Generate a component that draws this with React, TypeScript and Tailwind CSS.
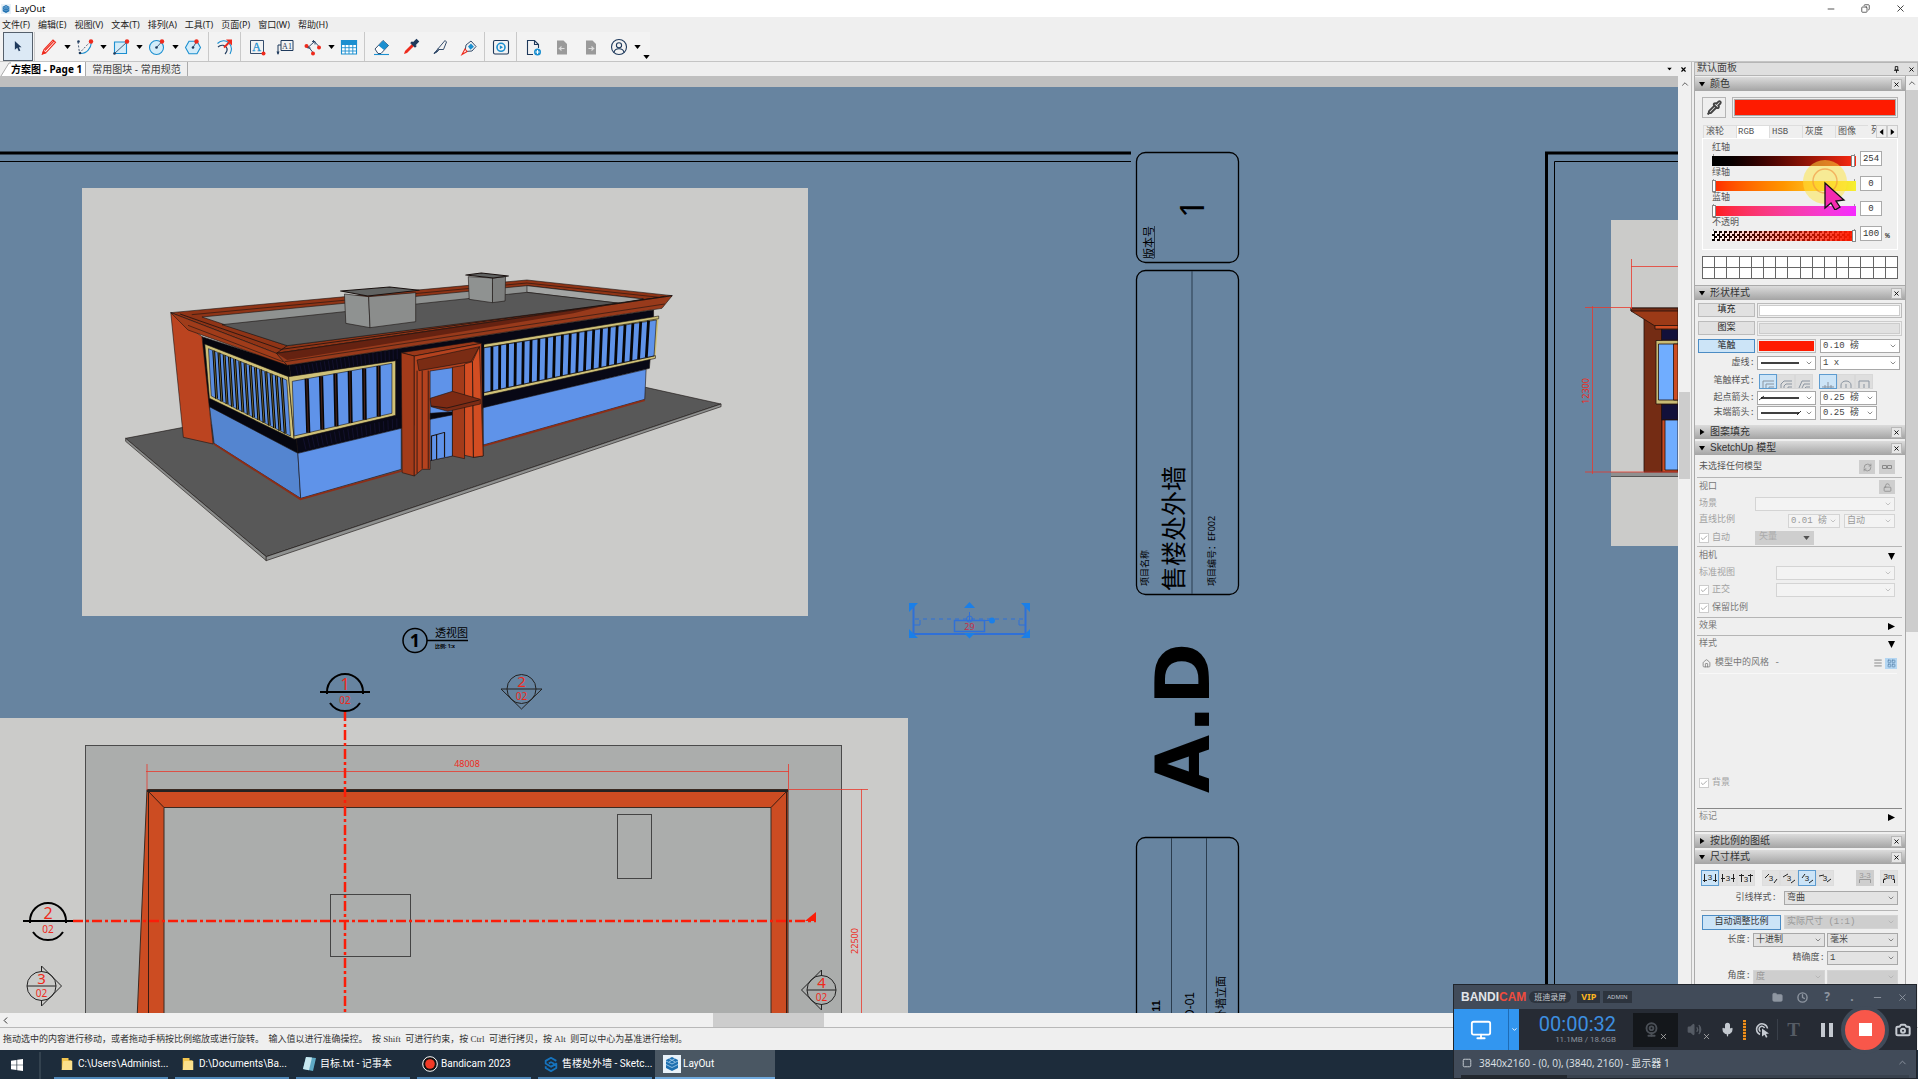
import type { ReactNode } from "react";
import {
  Camera,
  Check,
  ChevronDown,
  ChevronLeft,
  ChevronUp,
  Clock,
  Copy,
  Folder,
  Home,
  LayoutGrid,
  Menu,
  Mic,
  Minus,
  Monitor,
  Pipette,
  RefreshCw,
  Square,
  Unlock,
  Volume2,
  Webcam,
  X,
} from "lucide-react";
import clsx from "clsx";

const NAVY = "#1f3a5c";
const BLUE = "#1b8fd0";
const RED = "#ee2a1c";

/* ---------- small shared controls ---------- */

function Caret({ className }: { className?: string }) {
  return (
    <svg viewBox="0 0 8 5" className={clsx("h-[4px] w-[7px]", className)}>
      <path d="M0 0h8L4 5z" fill="#000" />
    </svg>
  );
}

function Select({
  label,
  value,
  className,
  disabled,
  flat,
  children,
}: {
  label: string;
  value?: string;
  className?: string;
  disabled?: boolean;
  flat?: boolean;
  children?: ReactNode;
}) {
  return (
    <span className={clsx("relative flex h-[14px] items-center", className)}>
      <select
        aria-label={label}
        disabled={disabled}
        className={clsx(
          "h-full w-full appearance-none border pl-[2px] text-[9px] leading-[12px] outline-none",
          disabled ? "border-[#d4d4d4] text-[#999]" : "border-[#a8a8a8] text-[#444]",
          flat ? (disabled ? "bg-[#cecece]" : "bg-[#e3e3e3]") : disabled ? "bg-[#f3f3f3]" : "bg-white"
        )}
      >
        <option>{value ?? ""}</option>
      </select>
      {children}
      <ChevronDown
        size={8}
        strokeWidth={2}
        className={clsx("pointer-events-none absolute right-[3px]", disabled ? "text-[#aaa]" : "text-[#555]")}
      />
    </span>
  );
}

function Tick({ label, dark }: { label: string; dark?: boolean }) {
  return (
    <label className={clsx("flex items-center gap-[3px] leading-[12px]", dark ? "text-[#777]" : "text-[#a2a2a2]")}>
      <span className="relative flex size-[10px]">
        <input type="checkbox" defaultChecked disabled className="size-[10px] appearance-none border border-[#ccc] bg-white" />
        <Check size={8} strokeWidth={3} className="pointer-events-none absolute top-px left-px text-[#aaa]" />
      </span>
      {label}
    </label>
  );
}

function SectionHead({ title, open }: { title: string; open?: boolean }) {
  return (
    <div className="flex h-[14px] items-center bg-linear-to-b from-[#dcdcdc] to-[#a4a4a4] pr-[3px] pl-[4px] font-['Liberation_Sans','Noto_Sans_CJK_SC',sans-serif]">
      <svg viewBox="0 0 6 6" className="size-[6px]">
        <path d={open ? "M0 1h6L3 5.5z" : "M1 0v6l4.500-3z"} fill="#000" />
      </svg>
      <h2 className="ml-[5px] flex-1 text-[10px] leading-none text-[#333]">{title}</h2>
      <button aria-label={`关闭${title}`} className="flex size-[11px] items-center justify-center border border-[#b8b8b8] bg-[#e6e6e6]">
        <X size={7} strokeWidth={3} className="text-black" />
      </button>
    </div>
  );
}

function Mark({ open }: { open?: boolean }) {
  return (
    <svg viewBox="0 0 6 6" className="size-[7px]">
      <path d={open ? "M0 0h6L3 6z" : "M0 0v6l6-3z"} fill="#000" />
    </svg>
  );
}

/* ---------- toolbar ---------- */

function Tool({ label, wide, children }: { label: string; wide?: boolean; children: ReactNode }) {
  return (
    <button aria-label={label} className={clsx("flex h-full items-center justify-center", wide ? "w-[29px]" : "w-7")}>
      <svg viewBox="0 0 18 18" className="size-[18px]" fill="none" stroke={BLUE} strokeWidth="1.100">
        {children}
      </svg>
    </button>
  );
}

function Drop() {
  return (
    <button aria-label="更多" className="flex h-full w-2 items-center justify-center">
      <Caret />
    </button>
  );
}

function Sep() {
  return <span className="mx-[2px] -ml-px h-full w-[3px] border-r border-[#c9c9c9]" />;
}

function Toolbar() {
  return (
    <div role="toolbar" className="flex h-[29px] items-center bg-[#efefef]">
      <div className="flex h-full items-center bg-[#f3f3f3] pl-[3px]">
        <button aria-label="选择" className="flex h-full w-[30px] items-center justify-center border border-[#55606c] bg-[#dce9f5]">
          <svg viewBox="0 0 10 14" className="h-[11px] w-[8px]">
            <path d="M1 0v11l3-2.500 2 4.500 2-1-2-4h3.500z" fill={NAVY} />
          </svg>
        </button>
        <span className="h-full w-[2px] border-r border-[#c9c9c9]" />
        <Tool label="铅笔">
          <path d="M2.500 16l1.500-4.500L13 2l2.500 2.200L6.500 14z" stroke={RED} fill="#fff" />
          <path d="M5 12.500L14 3.200M2.500 16l1-3L5.500 15z" stroke={RED} fill={RED} />
        </Tool>
        <Drop />
        <Tool label="圆弧">
          <path d="M2 4l1.500 11L14 4" stroke={NAVY} strokeWidth=".8" strokeDasharray="2 1.500" />
          <path d="M4 15.500C11 16 15 10 15.500 4" />
          <circle cx="15" cy="3.500" r="2.200" fill={RED} stroke="none" />
          <circle cx="2.500" cy="3.500" r="1.300" fill={NAVY} stroke="none" />
          <circle cx="4" cy="15" r="1.300" fill={NAVY} stroke="none" />
        </Tool>
        <Drop />
        <Tool label="矩形">
          <path d="M2.500 4h12v11.500h-12z" fill="#d3ecf9" />
          <path d="M2.500 15.500L15 4" stroke={NAVY} strokeWidth=".8" />
          <circle cx="15" cy="3.500" r="2.200" fill={RED} stroke="none" />
          <circle cx="2.500" cy="15.500" r="1.300" fill={NAVY} stroke="none" />
        </Tool>
        <Drop />
        <Tool label="圆">
          <circle cx="8.500" cy="9.500" r="7" fill="#d3ecf9" />
          <path d="M8.500 9.500L13.500 4" stroke={NAVY} strokeWidth=".8" />
          <circle cx="14" cy="3.500" r="2.200" fill={RED} stroke="none" />
          <circle cx="8.500" cy="9.500" r="1.300" fill={NAVY} stroke="none" />
        </Tool>
        <Drop />
        <Tool label="多边形">
          <path d="M1.500 9.500L5 3.200h8l3.500 6.300-3.500 6.300H5z" fill="#d3ecf9" />
          <path d="M9 9.500L12 4.500" stroke={NAVY} strokeWidth=".8" />
          <circle cx="12.500" cy="3.500" r="2.200" fill={RED} stroke="none" />
          <circle cx="9" cy="9.500" r="1.300" fill={NAVY} stroke="none" />
        </Tool>
        <Sep />
        <Tool label="偏移">
          <path d="M1.500 5.500C5 2 10 2 13 5c3 3 3 7 1 11" />
          <path d="M2 9c3-3 8-2 9 1.500.5 2-.5 4-2 5.500" stroke={NAVY} />
          <path d="M8 9.500l5-5" stroke={RED} strokeWidth="2" />
          <path d="M10 1.500h6V7.500z" fill={RED} stroke="none" />
        </Tool>
        <Sep />
        <Tool label="文本">
          <path d="M2.500 2.500h13v13h-13z" stroke={NAVY} strokeWidth=".9" />
          <text x="8.500" y="13" textAnchor="middle" fontSize="12" fill={BLUE} stroke={BLUE} strokeWidth=".3" fontFamily="Liberation Serif, serif">
            A
          </text>
          <circle cx="15.500" cy="15.500" r="2" fill={RED} stroke="none" />
        </Tool>
        <Tool label="标签">
          <path d="M5 2.500h12v10H5zM5 7H2v9" stroke={NAVY} strokeWidth="1" />
          <path d="M.5 13.500h3L2 17z" fill={NAVY} stroke="none" />
          <text x="11" y="10.500" textAnchor="middle" fontSize="8" fill={NAVY} stroke="none" fontFamily="Liberation Serif, serif">
            A1
          </text>
        </Tool>
        <Tool label="尺寸">
          <path d="M4 9.500L10.500 3.500M3 7l6 7.500M9 2l6 6.500" stroke={NAVY} strokeWidth=".9" />
          <path d="M3.500 7v3h3M8 3.500h3v3" stroke={NAVY} strokeWidth=".9" />
          <circle cx="2.500" cy="8" r="2" fill={RED} stroke="none" />
          <circle cx="9" cy="15.500" r="2" fill={RED} stroke="none" />
          <circle cx="15" cy="9.500" r="2" fill={RED} stroke="none" />
        </Tool>
        <Drop />
        <Tool label="表格">
          <path d="M1.500 2.500h15v13.500h-15z" fill="#fff" />
          <path d="M1.500 2.500h15v4h-15z" fill={BLUE} />
          <path d="M5.200 6v10M9 6v10M12.800 6v10M1.500 9.700h15M1.500 13h15" strokeWidth=".9" />
        </Tool>
        <Sep />
        <Tool label="橡皮擦" wide>
          <path d="M2 11l8-8.500 5.500 5L8 15.500H5z" fill="#fff" stroke={NAVY} strokeWidth=".9" />
          <path d="M5.500 7.500L10 2.500l5.500 5L11 12z" fill={BLUE} stroke="none" />
          <path d="M1 16.500h15" />
        </Tool>
        <Tool label="样式" wide>
          <path d="M2 16l1-3 7-7 2 2-7 7z" fill={RED} stroke="none" />
          <path d="M9 5l4 4 1-1-1-1 3.500-3.500-2-2L11 5l-1-1z" fill={NAVY} stroke={NAVY} />
        </Tool>
        <Tool label="分割" wide>
          <path d="M3 15.500L14 2.500l1.500 1.500-3 7.500H8zM3 15.500l3-1.500 2-2.500-1-1" stroke={NAVY} strokeWidth=".9" />
        </Tool>
        <Tool label="合并" wide>
          <path d="M5 13.500L6 7l5-4 5 5.500-4 4.500z" stroke={NAVY} strokeWidth=".9" />
          <path d="M8 8.500L11 5.500l3 3.300-3.500 3z" fill={BLUE} stroke="none" />
          <path d="M2 16.500L5 11l2 2.500z" fill="#fff" stroke={RED} />
        </Tool>
        <Sep />
        <Tool label="演示">
          <rect x="1.500" y="2.500" width="15" height="13.500" rx="1.500" stroke={NAVY} />
          <circle cx="9" cy="9.300" r="4" strokeWidth="1.600" />
          <path d="M7.800 7.300v4l3.200-2z" fill={BLUE} stroke="none" />
        </Tool>
        <Sep />
        <Tool label="添加页面">
          <path d="M9 16.500H3.500v-14h7l4 4V10M10.500 2.500v4h4" stroke={NAVY} />
          <circle cx="13.500" cy="14" r="3.500" fill={BLUE} stroke="none" />
          <path d="M11.500 14h4M13.500 12v4" stroke="#fff" />
        </Tool>
        <Tool label="上一页" wide>
          <path d="M4 2.500h6.500L14 6v10.500H4z" fill="#9a9a9a" stroke="none" />
          <path d="M11.500 10.500H6.500l2-2m-2 2l2 2" stroke="#ddd" />
        </Tool>
        <Tool label="下一页" wide>
          <path d="M4 2.500h6.500L14 6v10.500H4z" fill="#9a9a9a" stroke="none" />
          <path d="M6.500 10.500h5l-2-2m2 2l-2 2" stroke="#ddd" />
        </Tool>
        <Tool label="账户">
          <circle cx="9" cy="9" r="7.500" stroke={NAVY} />
          <circle cx="9" cy="7.300" r="2.600" stroke={NAVY} />
          <path d="M4 14.500c1-5 9-5 10 0" stroke={NAVY} />
        </Tool>
        <Drop />
        <Caret className="mt-[20px] ml-[2px]" />
      </div>
    </div>
  );
}

/* ---------- perspective drawing ---------- */

type Pt = [number, number];

const lerp = (a: Pt, b: Pt, t: number) => `${a[0] + (b[0] - a[0]) * t} ${a[1] + (b[1] - a[1]) * t}`;

function mullions(tl: Pt, tr: Pt, bl: Pt, br: Pt, n: number) {
  return Array.from({ length: n }, (_, i) => {
    const t = (i + 1) / (n + 1);
    return `M${lerp(tl, tr, t)}L${lerp(bl, br, t)}`;
  }).join("");
}

function Building() {
  const left = mullions([276, 506], [444, 600], [282, 648], [452, 768], 14);
  const front = mullions([456, 604], [672, 550], [460, 768], [672, 700], 6);
  const right = mullions([868, 503], [1238, 418], [868, 638], [1233, 528], 21);
  return (
    <svg
      x="80"
      y="180"
      width="730"
      height="440"
      viewBox="0 0 1568 1320"
      preserveAspectRatio="none"
      stroke="#1a1210"
      strokeWidth="1.500"
      strokeLinejoin="round"
    >
      {/* ground slab */}
      <path d="M98 775L222 742 1215 622 1377 672 400 1130z" fill="#585858" />
      <path d="M98 775L400 1130v12L98 784z" fill="#8a8c8b" />
      <path d="M400 1130L1377 672v8L400 1142z" fill="#8f9190" />
      {/* dark wall bands */}
      <path d="M262 470L450 555 468 820 274 680z" fill="#06060e" />
      <path d="M450 555L1232 390v22L1223 565 468 820z" fill="#080815" />
      <path d={mullions([455, 560], [690, 505], [460, 588], [690, 535], 26)} stroke="#1a163c" />
      <path d={mullions([470, 778], [690, 712], [476, 812], [690, 740], 22)} stroke="#1a163c" />
      {/* glazing below */}
      <path d="M278 680L468 820 474 955 288 790z" fill="#5485d0" />
      <path d="M468 820L690 745V868L474 955z" fill="#5f93e9" />
      <path d="M866 683L1216 568 1213 658 866 795z" fill="#5f93e9" />
      <path d="M288 792L474 958 692 872M866 798L1213 661" fill="none" stroke="#8e2d16" strokeWidth="5" />
      {/* left fin */}
      <path d="M195 398L262 470 286 792 222 772z" fill="#bb4420" />
      {/* window strips */}
      <path d="M268 492L448 590 460 778 278 655z" fill="#cfc178" />
      <path d="M276 506L444 600 452 768 282 648z" fill="#5b8ddf" />
      <path d={left} stroke="#000" strokeWidth="6" />
      <path d={left} stroke="#b5a964" strokeWidth="1.500" />
      <path d="M448 590L678 542V706L460 778z" fill="#cfc178" />
      <path d="M456 604L670 550V700L460 768z" fill="#5f93e9" />
      <path d={front} stroke="#060608" strokeWidth="9" />
      <path d={front} stroke="#5b2d22" strokeWidth="2" />
      <path d="M868 493L1243 408 1236 535 868 648z" fill="#cfc178" stroke="none" />
      <path d="M868 503L1238 420 1233 528 868 638z" fill="#5f93e9" />
      <path d={right} stroke="#060608" strokeWidth="6" />
      <path d="M868 493L1243 408V416L868 503M868 638L1236 527V535L868 648" fill="none" />
      {/* roof */}
      <path d="M195 398L960 300 1272 347 422 520z" fill="#8f3416" />
      <path d="M240 404L960 309 1245 352" fill="none" />
      <path d="M262 411L960 317 1210 357 445 497z" fill="#8f9291" />
      <path d="M960 317L1210 357 1160 370 960 337z" fill="#a3a5a4" />
      <path d="M305 434L960 337 1160 370 445 497z" fill="#585858" />
      <path d="M215 402L432 508 1255 350M422 520L445 497" fill="none" strokeWidth="2" />
      <path d="M195 398L422 520 445 556 232 450z" fill="#a03c1a" />
      <path d="M232 436L436 545" />
      <path d="M422 520L1272 347 1250 385 445 556z" fill="#983a1b" />
      <path d="M422 520L1130 376 1060 400 445 540z" fill="#652211" stroke="none" />
      <path d="M422 520L1272 347M440 545L1256 372" fill="none" />
      {/* roof boxes */}
      <path d="M568 342L620 350 623 443 571 430z" fill="#8f9291" />
      <path d="M620 350L721 338V425L623 443z" fill="#8b8d8c" />
      <path d="M560 333L665 321 728 331 618 348z" fill="#616362" strokeWidth="3" />
      <path d="M834 290L886 294V368L836 358z" fill="#8f9291" />
      <path d="M886 294L914 290 913 363 886 368z" fill="#7d7f7e" />
      <path d="M829 285L862 279 920 288 888 294z" fill="#616362" strokeWidth="3" />
      {/* entrance */}
      <path d="M690 518L845 485 862 490 718 528z" fill="#9a3819" />
      <path d="M690 518L718 528V888L692 878z" fill="#a33b1a" />
      <path d="M718 528L862 490 866 828 845 832 843 690 800 690V828L752 842V868L735 868 718 888z" fill="#b4421e" />
      <path d="M724 540L858 500 840 545 728 572z" fill="#7a2c14" />
      <path d="M724 572V880M735 572V866M748 572V866" fill="none" strokeWidth="2" />
      <path d="M752 573L800 563V828L752 842z" fill="#5f93e9" />
      <path d="M752 700L802 695V704L752 718z" fill="#07070f" />
      <path d="M800 562L826 556V836L800 828z" fill="#a33b1a" />
      <path d="M826 552L843 545 845 832 826 826zM858 500L866 828 845 832 843 545z" fill="#d24d22" />
      <path d="M752 655L800 634 860 658V672L790 694 754 680z" fill="#7d2b14" />
      <path d="M754 678L788 684 858 660" fill="none" strokeWidth="2" />
      <path d="M755 842V768L783 757V832M766 764V838" fill="none" strokeWidth="2.500" />
    </svg>
  );
}

/* ---------- drawing sheet ---------- */

function Marker({ x, y, n, point }: { x: number; y: number; n: string; point: string }) {
  return (
    <g transform={`translate(${x} ${y})`}>
      <g fill="none" stroke="#222" strokeWidth="1">
        <circle r="14.500" />
        <path d={point} />
      </g>
      <g fill={RED} textAnchor="middle">
        <text y="-2" fontSize="15">
          {n}
        </text>
        <text y="11" fontSize="10">
          02
        </text>
      </g>
    </g>
  );
}

function SectionMark({ x, y, n }: { x: number; y: number; n: string }) {
  return (
    <g transform={`translate(${x} ${y})`}>
      <path d="M-25 0H25M-18 2V0A18 18 0 0 1 18 0V2M-15 11A18 18 0 0 0 15 11" fill="none" stroke="#000" strokeWidth="2" />
      <g fill={RED} textAnchor="middle">
        <text y="-2" fontSize="16">
          {n}
        </text>
        <text y="12" fontSize="10">
          02
        </text>
      </g>
    </g>
  );
}

function Sheet() {
  return (
    <svg
      viewBox="0 76 1678 937"
      preserveAspectRatio="xMinYMin slice"
      className="h-full w-full bg-[#6784a0]"
      fontFamily="'Noto Sans', 'Noto Sans CJK SC', sans-serif"
    >
      <rect x="0" y="76" width="1678" height="11" fill="#bfbfbf" />

      {/* sheet borders */}
      <path d="M0 153H1131" stroke="#000" strokeWidth="3" />
      <path d="M0 161.500H1131" stroke="#000" />
      <path d="M1678 153H1546.500V1013" fill="none" stroke="#000" strokeWidth="3" />
      <path d="M1678 161.500H1554.500V1013" fill="none" stroke="#000" />

      {/* perspective view */}
      <rect x="82" y="188" width="726" height="428" fill="#cbcbc9" />
      <Building />
      <circle cx="415" cy="640.500" r="12" fill="none" stroke="#000" strokeWidth="1.500" />
      <text x="415" y="647" fontSize="18" fontWeight="700" textAnchor="middle">
        1
      </text>
      <path d="M427 640.500H468" stroke="#000" strokeWidth="1.500" />
      <text x="435" y="637" fontSize="11">
        透视图
      </text>
      <text x="435" y="648" fontSize="5" fontWeight="700">
        比例: 1:x
      </text>

      {/* floor plan */}
      <rect x="0" y="718" width="908" height="300" fill="#cbcbc9" />
      <rect x="85.500" y="745.500" width="756" height="280" fill="#abadac" stroke="#4a4a4a" />
      <path d="M147 789.500H788V1020H771V807.500H164V1020H137z" fill="#cc4c22" stroke="#3b2a22" />
      <path d="M147 791H788" stroke="#222" strokeWidth="2" />
      <path d="M148.500 791V1020M786.500 791V1020M147 790L164 807.500M788 790L771 807.500" fill="none" stroke="#3b1c12" />
      <rect x="617.500" y="814.500" width="34" height="64" fill="none" stroke="#444" />
      <rect x="330.500" y="894.500" width="80" height="62" fill="none" stroke="#444" />
      <g fill="none" stroke="#e8392c">
        <path d="M146 771.500H789M147 764V790M788.500 764V790M788 789.500H868M861.500 789V1013" strokeWidth=".8" />
        <path d="M345 711V1013M73 921H816" stroke="#fb1d08" strokeWidth="2.500" strokeDasharray="10 3 3 3" />
      </g>
      <path d="M805 921L816 912V921z" fill="#fb1d08" />
      <text x="467" y="767" fontSize="9" fill={RED} textAnchor="middle">
        48008
      </text>
      <text transform="translate(858 941) rotate(-90)" fontSize="9" fill={RED} textAnchor="middle">
        22500
      </text>
      <SectionMark x={345} y={692} n="1" />
      <SectionMark x={48} y={921} n="2" />
      <Marker x={521.5} y={689} n="2" point="M-20.500 0H20.500L0 20z" />
      <Marker x={41.5} y={986} n="3" point="M-14.500 0H14.500M0 -14V-20L20 0 0 20V14" />
      <Marker x={821.5} y={990} n="4" point="M-14.500 0H14.500M0 -14V-20L-20 0 0 20V14" />

      {/* selected dimension */}
      <g fill="none" stroke="#2f70d8">
        <path d="M913.500 606V634H1025.500V606" strokeWidth="2" />
        <path d="M915 619H1025" strokeDasharray="4 4" strokeWidth="1.200" />
        <path d="M914 625h6v-5M1025 625h-6v-5M969.500 612V621M970 620.500H990" />
        <rect x="954.500" y="620.500" width="30" height="11" strokeWidth="1.500" />
        <circle cx="969.500" cy="619" r="3" />
      </g>
      <path
        d="M909 603h9l-9 9zM1030 603h-9l9 9zM909 638v-9l9 9zM1030 638v-9l-9 9zM964 608h11l-5.500-6zM964 633h11l-5.500 5.500z"
        fill="#1a7fe8"
      />
      <circle cx="992" cy="620.500" r="3" fill="#1a7fe8" />
      <text x="969.500" y="630" fontSize="9" fill="#c22f4c" textAnchor="middle">
        29
      </text>

      {/* title block */}
      <g fill="none" stroke="#000" strokeWidth="1.300">
        <rect x="1136.500" y="152.500" width="102" height="110" rx="9" />
        <rect x="1136.500" y="270.500" width="102" height="324" rx="9" />
        <rect x="1136.500" y="837.500" width="102" height="200" rx="9" />
      </g>
      <path d="M1192 271V594M1171.500 838V1020M1206.500 838V1020M1154.500 226V258" stroke="#2b3c4e" />
      <text transform="translate(1204 218) rotate(-90)" fontSize="33">
        1
      </text>
      <text transform="translate(1153 259) rotate(-90)" fontSize="11">
        版本号
      </text>
      <text transform="translate(1148 586) rotate(-90)" fontSize="9">
        项目名称
      </text>
      <text transform="translate(1183 591) rotate(-90)" fontSize="25">
        售楼处外墙
      </text>
      <text transform="translate(1215 586) rotate(-90)" fontSize="9">
        项目编号：EF002
      </text>
      <text
        transform="translate(1209 793) rotate(-90)"
        fontSize="75"
        fontWeight="700"
        fontFamily="'DejaVu Sans', sans-serif"
      >
        A.D
      </text>
      <g textAnchor="end" fontFamily="'Liberation Sans', 'Noto Sans CJK SC', sans-serif">
        <text transform="translate(1160 1000) rotate(-90)" fontSize="11" fontWeight="700">
          11
        </text>
        <text transform="translate(1194 992) rotate(-90)" fontSize="12">
          D-01
        </text>
        <text transform="translate(1225 976) rotate(-90)" fontSize="11">
          外墙立面
        </text>
      </g>

      {/* elevation view on the next sheet */}
      <rect x="1611" y="220" width="67" height="326" fill="#cbcbc9" />
      <rect x="1611" y="472" width="67" height="4" fill="#8f9090" />
      <path d="M1611 476.500H1678" stroke="#555" />
      <g stroke="#24100a" strokeWidth=".8">
        <path d="M1644 318H1662V472H1644z" fill="#742c14" />
        <path d="M1631 308H1678V326H1655L1631 311z" fill="#9c3a17" />
        <path d="M1631 308H1678V311H1631z" fill="#742c14" />
        <path d="M1655 325.500H1678V329H1655z" fill="#cc4c22" />
        <path d="M1661.500 329.500H1678V340H1661.500zM1661.500 404H1678V420H1661.500z" fill="#12103a" />
        <path d="M1656 340.500H1678V404H1656z" fill="#c9bb75" />
        <path d="M1658.500 344H1678V400H1658.500z" fill="#70adff" />
        <path d="M1673.500 344H1678V400H1673.500z" fill="#cc4c22" />
        <path d="M1662 420H1678V472H1662z" fill="#cc4c22" />
        <path d="M1665 420H1678V470H1665z" fill="#70adff" />
      </g>
      <path
        d="M1592.500 306V474M1585 307.500H1632M1585 472H1678M1631.500 259V309M1631 266.500H1678"
        fill="none"
        stroke="#e8392c"
        strokeWidth=".8"
      />
      <text transform="translate(1589 391) rotate(-90)" fontSize="9" fill={RED} textAnchor="middle">
        12300
      </text>
    </svg>
  );
}

/* ---------- default tray ---------- */

const axes = [
  { label: "红轴", value: 254, max: 255, at: 254, track: "bg-linear-to-r from-black to-[#ff2a12]" },
  { label: "绿轴", value: 0, max: 255, at: 0, track: "bg-linear-to-r from-[#ff2000] via-[#ff9500] to-[#f5f032]" },
  { label: "蓝轴", value: 0, max: 255, at: 0, track: "bg-linear-to-r from-[#fe1b00] to-[#f52aff]" },
  {
    label: "不透明",
    value: 100,
    max: 100,
    at: 100,
    track:
      "bg-[linear-gradient(to_right,transparent,#fe1b00),repeating-conic-gradient(#000_0_25%,#fff_0_50%)] bg-[length:100%_100%,5px_5px]",
  },
];

function ColorSection() {
  return (
    <section>
      <SectionHead title="颜色" open />
      <div className="px-[7px] pt-[6px]">
        <div className="flex h-[21px] gap-[6px]">
          <button aria-label="吸管" className="flex w-6 items-center justify-center border border-[#b5b5b5]">
            <Pipette size={15} strokeWidth={3} className="text-[#444]" />
          </button>
          <div className="flex-1 border border-[#b5b5b5] p-px">
            <div className="h-full border border-[#a9a9a9] bg-[#fe1b00]" />
          </div>
        </div>
        <div role="tablist" className="mt-[7px] flex h-[13px] items-stretch pl-px text-[9px] leading-none text-[#555]">
          {["滚轮", "RGB", "HSB", "灰度", "图像"].map((t) => (
            <button
              key={t}
              role="tab"
              aria-selected={t === "RGB"}
              className={clsx("w-[33px] border-t border-l border-[#ddd] text-left", t === "RGB" ? "bg-white pl-px" : "pl-[2px]")}
            >
              {t}
            </button>
          ))}
          <span className="w-[8px] overflow-hidden pt-[2px] pl-[3px]">列</span>
          <button aria-label="向左" className="flex w-[11px] items-center justify-center border border-[#ccc]">
            <Caret className="rotate-90" />
          </button>
          <button aria-label="向右" className="flex w-[11px] items-center justify-center border border-[#ccc]">
            <Caret className="-rotate-90" />
          </button>
        </div>
        <div className="flex h-[112px] flex-col border border-white pt-[2px] pl-[9px]">
          {axes.map((a) => (
            <div key={a.label} className="flex h-[25px] items-end">
              <div className="w-[144px]">
                <label htmlFor={a.label} className="block h-[12px] text-[9px] leading-[12px] text-[#555]">
                  {a.label}
                </label>
                <div className="mx-px h-[2px] border-x border-[#999]" />
                <input
                  id={a.label}
                  type="range"
                  max={a.max}
                  defaultValue={a.at}
                  className={clsx(
                    "block h-[10px] w-full appearance-none [&::-webkit-slider-thumb]:h-[12px] [&::-webkit-slider-thumb]:w-[4px] [&::-webkit-slider-thumb]:appearance-none [&::-webkit-slider-thumb]:border [&::-webkit-slider-thumb]:border-[#888] [&::-webkit-slider-thumb]:bg-white",
                    a.track
                  )}
                />
              </div>
              <input
                aria-label={`${a.label}数值`}
                defaultValue={a.value}
                className="ml-[4px] h-[15px] w-[22px] border border-[#aaa] bg-white text-center text-[9px] text-[#333]"
              />
              {a.label === "不透明" && <span className="ml-[3px] text-[8px] leading-[10px]">%</span>}
            </div>
          ))}
        </div>
        <div className="mt-[6px] grid h-[23px] grid-cols-16 border-t border-l border-[#666] bg-white">
          {Array.from({ length: 32 }, (_, i) => (
            <span key={i} className="border-r border-b border-[#666]" />
          ))}
        </div>
      </div>
      <div className="mt-[5px] h-[2px] border-b border-[#aaa]" />
    </section>
  );
}

function Line({ arrow }: { arrow?: "start" | "end" }) {
  return (
    <svg viewBox="0 0 44 8" className="pointer-events-none absolute left-[2px] h-[8px] w-[44px]">
      <path d="M2 4H40" stroke="#000" strokeWidth="1.500" />
      {arrow && <path d={arrow === "start" ? "M0 6L5 2" : "M38 6L42 2"} stroke="#000" strokeWidth=".8" />}
    </svg>
  );
}

function StyleButton({ label, on, children }: { label: string; on?: boolean; children: ReactNode }) {
  return (
    <button
      aria-label={label}
      className={clsx("flex h-[15px] w-[18px] items-end justify-center border", on ? "border-[#5e9cd0] bg-[#cce4f7]" : "border-[#d8d8d8] bg-[#dedede]")}
    >
      <svg viewBox="0 0 12 10" className="h-[10px] w-[12px]" fill="none" stroke="#8a94a0" strokeWidth="1">
        {children}
      </svg>
    </button>
  );
}

function PaintButton({ children, on }: { children: string; on?: boolean }) {
  return (
    <button
      className={clsx(
        "h-[14px] w-[57px] border text-[9px] leading-none text-[#222]",
        on ? "border-[#4c8cc4] bg-[#cce4f7]" : "border-[#bbb] bg-[#e1e1e1]"
      )}
    >
      {children}
    </button>
  );
}

function ShapeSection() {
  const joins = ["M1 10V3h11M4 10V6h8M7 10V9h5", "M1 10V6l3-3h8M4 10V8l2-2h6M8 10V9h4", "M1 10L4 3h8M4 10l2-4h6M7 10l1-1h4"];
  const caps = ["M0 9h12M3 7v3M9 7v3M6 4v6", "M1 10V7a5 4 0 0 1 10 0v3M6 6v4", "M1 10V3h10v7M6 6v4"];
  return (
    <section>
      <SectionHead title="形状样式" open />
      <div className="px-[3px] pt-[3px] pb-[4px] text-[9px] leading-none text-[#555]">
        <div className="flex h-[18px] gap-[2px]">
          <PaintButton>填充</PaintButton>
          <div className="h-[15px] flex-1 border border-[#bbb] p-px">
            <div className="h-full border border-[#ccc] bg-white" />
          </div>
        </div>
        <div className="flex h-[18px] gap-[2px]">
          <PaintButton>图案</PaintButton>
          <div className="h-[15px] flex-1 border border-[#ccc] p-px">
            <div className="h-full border border-[#ccc] bg-[#e1e1e1]" />
          </div>
        </div>
        <div className="flex h-[17px] gap-[2px]">
          <PaintButton on>笔触</PaintButton>
          <div className="mr-[2px] h-[14px] w-[59px] border border-[#bbb] p-px">
            <div className="h-full bg-[#fe1b00]" />
          </div>
          <Select label="笔触宽度" value="0.10 磅" className="w-[80px]" />
        </div>
        <div className="flex h-[18px]">
          <span className="w-[57px] pt-[3px] text-right">虚线:</span>
          <Select label="虚线" className="mr-[4px] ml-[2px] w-[59px]">
            <Line />
          </Select>
          <Select label="虚线比例" value="1 x" className="w-[80px]" />
        </div>
        <div className="flex h-[17px]">
          <span className="w-[57px] pt-[3px] text-right">笔触样式:</span>
          <div className="mr-[6px] ml-[4px] flex">
            {joins.map((d, i) => (
              <StyleButton key={d} label={`连接 ${i + 1}`} on={i === 0}>
                <path d={d} />
              </StyleButton>
            ))}
          </div>
          <div className="flex">
            {caps.map((d, i) => (
              <StyleButton key={d} label={`端点 ${i + 1}`} on={i === 0}>
                <path d={d} />
              </StyleButton>
            ))}
          </div>
        </div>
        <div className="flex h-[15px]">
          <span className="w-[57px] pt-[3px] text-right">起点箭头:</span>
          <Select label="起点箭头" className="mr-[4px] ml-[2px] w-[59px]">
            <Line arrow="start" />
          </Select>
          <Select label="起点箭头大小" value="0.25 磅" className="w-[57px]" />
        </div>
        <div className="flex h-[15px]">
          <span className="w-[57px] pt-[3px] text-right">末端箭头:</span>
          <Select label="末端箭头" className="mr-[4px] ml-[2px] w-[59px]">
            <Line arrow="end" />
          </Select>
          <Select label="末端箭头大小" value="0.25 磅" className="w-[57px]" />
        </div>
      </div>
    </section>
  );
}

function GreyButton({ label, children }: { label: string; children: ReactNode }) {
  return (
    <button aria-label={label} disabled className="flex h-[14px] w-4 items-center justify-center bg-[#cecece] text-[#888]">
      {children}
    </button>
  );
}

function ModelSection() {
  return (
    <section>
      <SectionHead title="SketchUp 模型" open />
      <div className="pr-[3px] pl-[2px] text-[9px] leading-none text-[#a2a2a2]">
        <div className="flex h-[23px] items-center gap-1 border-b border-[#b5b5b5] pt-[2px] pr-[7px] pl-[2px] text-[#555]">
          <span className="flex-1">未选择任何模型</span>
          <GreyButton label="刷新">
            <RefreshCw size={9} />
          </GreyButton>
          <GreyButton label="链接">
            <svg viewBox="0 0 10 4" className="h-[4px] w-[10px]" fill="none" stroke="#888">
              <path d="M.5.500h4v3h-4zM5.500.500h4v3h-4z" />
            </svg>
          </GreyButton>
        </div>
        <div className="border-b border-[#b5b5b5] pr-[7px] pl-[2px]">
          <div className="flex h-[18px] items-center text-[#777]">
            <span className="flex-1">视口</span>
            <GreyButton label="解锁">
              <Unlock size={9} />
            </GreyButton>
          </div>
          <div className="flex h-[16px] items-center">
            <span className="flex-1">场景</span>
            <Select label="场景" disabled className="w-[140px]" />
          </div>
          <div className="flex h-[17px] items-center gap-1">
            <span className="flex-1">直线比例</span>
            <Select label="直线比例" value="0.01 磅" disabled className="w-[52px]" />
            <Select label="自动" value="自动" disabled className="w-[51px]" />
          </div>
          <div className="flex h-[17px] items-center">
            <span className="flex-1">
              <Tick label="自动" />
            </span>
            <button disabled className="mr-[81px] flex h-[14px] w-[59px] items-center justify-between bg-[#cecece] px-[4px] text-[#aaa]">
              矢量
              <Caret className="opacity-60" />
            </button>
          </div>
        </div>
        <div className="border-b border-[#b5b5b5] pr-[7px] pl-[2px]">
          <div className="flex h-[18px] items-center justify-between text-[#777]">
            相机
            <Mark open />
          </div>
          <div className="flex h-[16px] items-center">
            <span className="flex-1">标准视图</span>
            <Select label="标准视图" disabled className="w-[119px]" />
          </div>
          <div className="flex h-[17px] items-center">
            <span className="flex-1">
              <Tick label="正交" />
            </span>
            <Select label="投影" disabled className="w-[119px]" />
          </div>
          <div className="flex h-[19px] items-center">
            <Tick label="保留比例" dark />
          </div>
        </div>
        <div className="flex h-[18px] items-center justify-between border-b border-[#b5b5b5] pr-[7px] pl-[2px] text-[#777]">
          效果
          <Mark />
        </div>
        <div className="h-[173px] border-b border-[#888] pr-[5px] pl-[2px]">
          <div className="flex h-[17px] items-center justify-between pr-[2px] text-[#777]">
            样式
            <Mark open />
          </div>
          <div className="flex h-[21px] items-center border-b border-[#f8f8f8] text-[#777]">
            <Home size={9} className="mr-[4px] ml-[3px]" />
            <span className="flex-1">模型中的风格 -</span>
            <Menu size={10} />
            <span className="ml-[2px] flex h-[11px] w-[12px] items-center justify-center bg-[#b4d6f2] text-[#5b86ac]">
              <LayoutGrid size={9} />
            </span>
          </div>
          <div className="flex pt-[103px]">
            <Tick label="背景" />
          </div>
        </div>
        <div className="flex h-[17px] items-center justify-between pr-[7px] pl-[2px] text-[#888]">
          标记
          <Mark />
        </div>
      </div>
      <div className="mt-[5px] mb-[2px] border-b border-[#aaa]" />
    </section>
  );
}

function DimButton({ label, on, off, children }: { label: string; on?: boolean; off?: boolean; children: ReactNode }) {
  return (
    <button
      aria-label={label}
      className={clsx(
        "flex h-[16px] w-[18px] items-center justify-center border",
        on ? "border-[#5e9cd0] bg-[#cce4f7]" : off ? "border-[#cecece] bg-[#cecece]" : "border-[#ddd] bg-[#e1e1e1]"
      )}
    >
      <svg
        viewBox="0 0 14 12"
        className="h-[12px] w-[14px] shrink-0"
        fill="none"
        stroke={off ? "#999" : "#222"}
        color={off ? "#999" : "#222"}
        fontFamily="'Liberation Sans', sans-serif"
      >
        {children}
      </svg>
    </button>
  );
}

function Digits({ children, x, y }: { children: string; x: number; y: number }) {
  return (
    <text x={x} y={y} textAnchor="middle" fontSize="8" fill="currentColor" stroke="none">
      {children}
    </text>
  );
}

function DimensionSection() {
  const leaders = ["M1 6l4-4M10 11l3-4", "M1 5l5-3M9 11l4-3", "M2 6l3-4M9 11l4-3", "M1 4l5-1M9 10l4-3"];
  return (
    <section>
      <SectionHead title="尺寸样式" open />
      <div className="pr-[7px] pl-[6px] text-[9px] leading-none text-[#555]">
        <div className="flex h-[27px] items-center pt-px">
          <DimButton label="线上" on>
            <path d="M1.500 2v8M12.500 2v8M0 8.500h4M10 8.500h4" />
            <Digits x={7} y={8}>3</Digits>
          </DimButton>
          <DimButton label="居中">
            <path d="M1.500 2v8M12.500 2v8M0 6.500h4M10 6.500h4" />
            <Digits x={7} y={9}>3</Digits>
          </DimButton>
          <DimButton label="线下">
            <path d="M2.500 2v8M11.500 2v8M0 3.500h5M9 3.500h5" />
            <Digits x={7} y={10}>3</Digits>
          </DimButton>
          <span className="w-[7px]" />
          {leaders.map((d, i) => (
            <DimButton key={d} label={`对齐 ${i + 1}`} on={i === 2}>
              <path d={d} />
              <Digits x={7} y={9}>3</Digits>
            </DimButton>
          ))}
          <span className="flex-1" />
          <DimButton label="双单位" off>
            <path d="M1.500 11V7.500h11V11" />
            <Digits x={7} y={6}>3-3</Digits>
          </DimButton>
          <span className="w-[6px]" />
          <DimButton label="显示单位">
            <path d="M1.500 11V7.500h2M10.500 7.500h2V11" />
            <Digits x={7} y={7}>3m</Digits>
          </DimButton>
        </div>
        <div className="flex h-[20px] items-center justify-end gap-[7px] border-b border-[#b5b5b5] pb-[5px]">
          引线样式:
          <Select label="引线样式" value="弯曲" flat className="w-[114px]" />
        </div>
        <div className="flex h-[20px] items-center gap-[3px] pt-[2px]">
          <button className="ml-px h-[15px] w-[79px] border border-[#4c8cc4] bg-[#cce4f7] text-[9px] leading-none text-[#333]">自动调整比例</button>
          <Select label="比例" value="实际尺寸 (1:1)" flat disabled className="flex-1" />
        </div>
        <div className="flex h-[18px] items-center justify-end gap-[2px]">
          长度:
          <Select label="长度格式" value="十进制" flat className="w-[72px]" />
          <Select label="长度单位" value="毫米" flat className="w-[71px]" />
        </div>
        <div className="flex h-[18px] items-center justify-end gap-[2px]">
          精确度:
          <Select label="精确度" value="1" flat className="w-[71px]" />
        </div>
        <div className="flex h-[19px] items-center justify-end gap-[2px]">
          角度:
          <Select label="角度单位" value="度" flat disabled className="w-[72px]" />
          <Select label="角度精确度" flat disabled className="w-[71px]" />
        </div>
      </div>
    </section>
  );
}

function Tray() {
  return (
    <aside className="flex w-[227px] shrink-0 flex-col border-l border-[#bbb] bg-[#efefef] pl-[2px] font-['Liberation_Mono','Noto_Sans_CJK_SC',monospace]">
      <header className="flex h-[14px] items-center border border-[#b5b5b5] bg-[#dfdfdf] pr-[2px] pl-[2px] text-[10px] leading-none text-[#444]">
        <span className="flex-1">默认面板</span>
        <svg viewBox="0 0 6 8" className="mr-[9px] h-[7px] w-[5px]" fill="none" stroke="#000">
          <path d="M1.500 0.500h3v4h-3zM0 5h6M3 5v3" />
        </svg>
        <X size={7} strokeWidth={3} className="text-black" />
      </header>
      <div className="flex min-h-0 flex-1">
        <div className="flex min-w-0 flex-1 flex-col overflow-hidden border-x border-[#aaa] pt-px">
          <ColorSection />
          <ShapeSection />
          <div className="mb-[2px]">
            <SectionHead title="图案填充" />
          </div>
          <ModelSection />
          <div className="mb-[2px]">
            <SectionHead title="按比例的图纸" />
          </div>
          <DimensionSection />
        </div>
        <div className="flex w-[12px] flex-col items-center bg-[#f0f0f0]">
          <ChevronUp size={10} className="my-[2px] text-[#444]" />
          <div className="h-[542px] w-full bg-[#cdcdcd]" />
        </div>
      </div>
    </aside>
  );
}

/* ---------- taskbar and recorder ---------- */

const FolderIcon = () => (
  <svg viewBox="0 0 16 18" className="h-[16px] w-[12px]">
    <path d="M1 1h9v3h4v13H1z" fill="#f3c64f" />
    <path d="M3 5h12v12H1z" fill="#fbe08b" />
  </svg>
);

const HexIcon = ({ boxed }: { boxed?: boolean }) => (
  <svg viewBox="0 0 18 18" className="size-full">
    {boxed && <rect width="18" height="18" fill="#e8f1f8" />}
    <path d="M9 2l6 3v8l-6 3-6-3V5z" fill="#1d6fb0" />
    <path d="M3 6l6 3 6-3M3 9.500l6 3 6-3M6 3.500l6 3.500M12 3.500L6 7" stroke={boxed ? "#9cc7e6" : "#1d2c3b"} strokeWidth=".9" fill="none" />
  </svg>
);

const SketchIcon = () => (
  <svg viewBox="0 0 18 18" className="size-full" fill="none" stroke="#1673bd" strokeWidth="2" strokeLinejoin="round">
    <path d="M15 5.500L9 2 3 5.500v3L9 12l3-1.700V8.500L9 7 6.500 8.300" />
    <path d="M3 11.500v2L9 17l6-3.500v-5L9 12" />
  </svg>
);

const tasks: { label: string; icon: ReactNode }[] = [
  { label: "C:\\Users\\Administ...", icon: <FolderIcon /> },
  { label: "D:\\Documents\\Ba...", icon: <FolderIcon /> },
  {
    label: "目标.txt - 记事本",
    icon: (
      <svg viewBox="0 0 16 16" className="size-4">
        <path d="M5 1l10 1-3 13-10-2z" fill="#5fa9c4" />
        <path d="M5 1l6 .6-3 12.600-6-1.200z" fill="#c8e8f0" />
      </svg>
    ),
  },
  {
    label: "Bandicam 2023",
    icon: (
      <svg viewBox="0 0 16 16" className="size-4">
        <circle cx="8" cy="8" r="7.300" fill="#111" stroke="#fff" />
        <circle cx="8" cy="8" r="4.800" fill="#f23a26" />
      </svg>
    ),
  },
  { label: "售楼处外墙 - Sketc...", icon: <SketchIcon /> },
];

function Taskbar() {
  return (
    <footer className="flex h-[29px] items-stretch bg-[#1d2c3b] font-['Roboto','Noto_Sans_CJK_SC',sans-serif] text-[10px] text-white">
      <button aria-label="开始" className="flex w-[34px] items-center justify-center">
        <svg viewBox="0 0 12 12" className="size-[12px]" fill="#fff">
          <path d="M0 1.700l5.500-.8v4.800H0zM6.200.800L12 0v5.700H6.200zM0 6.300h5.500v4.800L0 10.300zM6.200 6.300H12V12l-5.800-.8z" />
        </svg>
      </button>
      <span className="mt-[2px] mr-[13px] ml-[5px] w-[2px] border-x border-[#33424f]" />
      {tasks.map((t) => (
        <button key={t.label} className="mr-[7px] flex w-[114px] items-center gap-[3px] border-b-2 border-[#4f87b8] pl-[5px] whitespace-nowrap">
          <span className="flex size-4 shrink-0 items-center justify-center">{t.icon}</span>
          {t.label}
        </button>
      ))}
      <button className="-ml-[4px] flex w-[120px] items-center gap-[2px] border-b-2 border-[#70aade] bg-[#4a5763] pl-[8px]">
        <span className="size-[18px]">
          <HexIcon boxed />
        </span>
        LayOut
      </button>
    </footer>
  );
}

function Recorder() {
  return (
    <div className="absolute right-px bottom-0 flex w-[464px] flex-col border border-[#20252c] bg-[#414b59] font-['Noto_Sans','Noto_Sans_CJK_SC',sans-serif] text-[#c5cad1]">
      <div className="flex h-[24px] items-center pl-[7px]">
        <span className="font-['Liberation_Sans',sans-serif] text-[12px] leading-none font-bold text-[#e3e6ea]">
          BANDI<span className="text-[#f04b3d]">CAM</span>
        </span>
        <span className="ml-[3px] rounded-full bg-[#2d343e] px-[5px] py-px text-[8px] leading-[10px]">班迪录屏</span>
        <span className="ml-[6px] bg-[#2d343e] px-[4px] text-[9px] leading-[12px] font-bold text-[#ffb61e]">VIP</span>
        <span className="ml-[3px] bg-[#2d343e] px-[4px] text-[6px] leading-[12px]">ADMIN</span>
        <div className="ml-auto flex items-center gap-[14px] pr-[8px] text-[#8e96a1]">
          <Folder size={11} fill="currentColor" />
          <Clock size={11} strokeWidth={3} />
          <span className="w-[10px] text-center text-[12px] leading-none font-bold">?</span>
          <span className="w-[12px] text-center text-[12px] leading-none font-bold">.</span>
          <Minus size={11} />
          <X size={11} />
        </div>
      </div>
      <div className="flex h-[41px] items-center bg-[#262b34]">
        <button aria-label="屏幕模式" className="flex h-full w-[54px] items-center justify-center bg-[#3296f0] text-white">
          <Monitor size={22} strokeWidth={2} />
        </button>
        <button aria-label="模式列表" className="flex h-full w-[11px] items-center justify-center border-l border-[#1f6cb5] bg-[#3296f0] text-white">
          <ChevronDown size={7} strokeWidth={3} />
        </button>
        <div className="w-[97px] text-right">
          <div className="font-['Roboto',sans-serif] text-[20px] leading-[20px] text-[#3d8fe0]">00:00:32</div>
          <div className="font-['Roboto',sans-serif] text-[8px] leading-[11px] text-[#8b929c]">11.1MB / 18.6GB</div>
        </div>
        <button aria-label="摄像头" className="ml-[17px] flex h-[34px] w-[45px] items-center justify-center bg-[#14171b] text-[#4a4f56]">
          <Webcam size={15} strokeWidth={3} />
          <X size={9} className="mt-[13px] text-[#bbb]" />
        </button>
        <button aria-label="扬声器" className="ml-[9px] flex w-[26px] items-center text-[#565c65]">
          <Volume2 size={15} fill="currentColor" />
          <X size={9} className="mt-[13px] text-[#bbb]" />
        </button>
        <button aria-label="麦克风" className="ml-[7px] text-[#c5cad1]">
          <Mic size={15} fill="currentColor" />
        </button>
        <span className="ml-[8px] h-[20px] w-[3px] bg-[repeating-linear-gradient(#ef8f1c_0_2px,#5a3c16_2px_3px)]" />
        <button aria-label="鼠标效果" className="ml-[9px] text-[#c5cad1]">
          <svg viewBox="0 0 15 16" className="h-[16px] w-[15px]" fill="none" stroke="currentColor" strokeWidth="1.500">
            <path d="M5 12.500A5.500 5.500 0 1 1 12.500 6.500M5.500 9.500A2.800 2.800 0 1 1 9.500 6" />
            <path d="M7 6.500l7 5-3 .5 1.500 3-1.500.7-1.500-3L7 14.500z" fill="currentColor" stroke="none" />
          </svg>
        </button>
        <span className="ml-[7px] h-[21px] w-px bg-[#3a404a]" />
        <button aria-label="文字" className="ml-[9px] w-[13px] font-['Liberation_Serif',serif] text-[19px] leading-none font-bold text-[#565c65]">
          T
        </button>
        <button aria-label="暂停" className="ml-[21px] flex gap-[4px]">
          <span className="h-[14px] w-[4px] bg-[#c5cad1]" />
          <span className="h-[14px] w-[4px] bg-[#c5cad1]" />
        </button>
        <button aria-label="停止" className="mr-[6px] ml-[8px] flex size-[48px] shrink-0 items-center justify-center rounded-full border-4 border-[#414b59] bg-[#f8574a]">
          <span className="size-[13px] bg-white" />
        </button>
        <button aria-label="截图" className="text-[#c5cad1]">
          <Camera size={16} strokeWidth={3} />
        </button>
      </div>
      <div className="flex h-[25px] items-center gap-[7px] px-[8px] font-['Open_Sans','Noto_Sans_CJK_SC',sans-serif] text-[10px] leading-none text-[#dfe3e8]">
        <Square size={10} strokeDasharray="2 2" />
        <span className="flex-1">3840x2160 - (0, 0), (3840, 2160) - 显示器 1</span>
        <ChevronUp size={11} className="text-[#8e96a1]" />
      </div>
      <div className="mx-[7px] flex h-[3px] bg-[#38414d]">
        <span className="w-[106px] bg-[#23282f]" />
      </div>
    </div>
  );
}

/* click highlight under the recorded pointer */
function Pointer() {
  return (
    <svg viewBox="0 0 46 50" className="pointer-events-none absolute top-[160px] left-[1802px] h-[50px] w-[46px]">
      <circle cx="23" cy="22" r="22" fill="#ffe63c" fillOpacity=".5" />
      <circle cx="23" cy="21" r="12" fill="none" stroke="#f0903c" strokeOpacity=".6" strokeWidth="1.500" />
      <path d="M23 23v25l6-5 4 7 5-3-4-6 8-1z" fill="#f52bb0" stroke="#111" strokeWidth="1.300" />
    </svg>
  );
}

const menus = ["文件(F)", "编辑(E)", "视图(V)", "文本(T)", "排列(A)", "工具(T)", "页面(P)", "窗口(W)", "帮助(H)"];

export default function App() {
  return (
    <div className="relative flex h-screen flex-col overflow-hidden bg-[#efefef] font-['Noto_Sans','Noto_Sans_CJK_SC',sans-serif] text-black">
      <header className="flex h-[17px] shrink-0 items-center bg-white pl-[1px] text-[9px] leading-none">
        <span className="mr-[4px] size-[10px]">
          <HexIcon boxed />
        </span>
        <h1 className="flex-1 text-[9px]">LayOut</h1>
        <div className="flex items-center gap-[25px] pr-[12px] text-[#333]">
          <button aria-label="最小化">
            <Minus size={10} strokeWidth={2} />
          </button>
          <button aria-label="还原">
            <Copy size={9} strokeWidth={2} className="-scale-x-100" />
          </button>
          <button aria-label="关闭">
            <X size={11} strokeWidth={2} />
          </button>
        </div>
      </header>
      <nav className="flex h-[15px] shrink-0 items-center gap-[8px] pl-[2px] text-[9px] leading-none text-[#222]">
        {menus.map((m) => (
          <button key={m}>{m}</button>
        ))}
      </nav>
      <Toolbar />
      <div className="flex min-h-0 flex-1 border-t border-[#c4c4c4]">
        <main className="flex min-w-0 flex-1 flex-col">
          <div role="tablist" className="flex h-[14px] shrink-0 items-stretch text-[10px] leading-none whitespace-nowrap">
            <svg viewBox="0 0 11 14" className="h-[14px] w-[11px]">
              <path d="M1 14L9 1h2v13z" fill="#fff" />
              <path d="M1 14L9 1h2" fill="none" stroke="#aaa" />
            </svg>
            <button role="tab" aria-selected className="border-r border-[#aaa] bg-white pr-[3px] pb-px font-bold">
              方案图 - Page 1
            </button>
            <button role="tab" className="border-r border-[#aaa] px-[6px] pb-px text-[#444]">
              常用图块 - 常用规范
            </button>
            <div className="ml-auto flex items-center gap-[7px] pr-[4px]">
              <Caret className="scale-75" />
              <X size={7} strokeWidth={4} />
            </div>
          </div>
          <div className="flex min-h-0 flex-1">
            <div className="min-w-0 flex-1">
              <Sheet />
            </div>
            <div className="flex w-[13px] flex-col items-center bg-[#f0f0f0]">
              <ChevronUp size={10} className="mt-[3px] text-[#444]" />
              <div className="mt-[303px] h-[87px] w-[11px] bg-[#cdcdcd]" />
            </div>
          </div>
          <div className="flex h-[14px] shrink-0 items-center bg-[#f0f0f0]">
            <ChevronLeft size={11} className="text-[#222]" />
            <div className="ml-[702px] h-full w-[111px] bg-[#cdcdcd]" />
          </div>
        </main>
        <Tray />
      </div>
      <p className="flex h-[23px] shrink-0 items-center border-t border-[#b8b8b8] pl-[3px] font-['Liberation_Serif','Noto_Sans_CJK_SC',serif] text-[9px] leading-none whitespace-pre text-[#333]">
        {
          "拖动选中的内容进行移动，或者拖动手柄按比例缩放或进行旋转。  输入值以进行准确操控。  按 Shift  可进行约束，按 Ctrl  可进行拷贝，按 Alt  则可以中心为基准进行绘制。"
        }
      </p>
      <Taskbar />
      <Recorder />
      <Pointer />
    </div>
  );
}
